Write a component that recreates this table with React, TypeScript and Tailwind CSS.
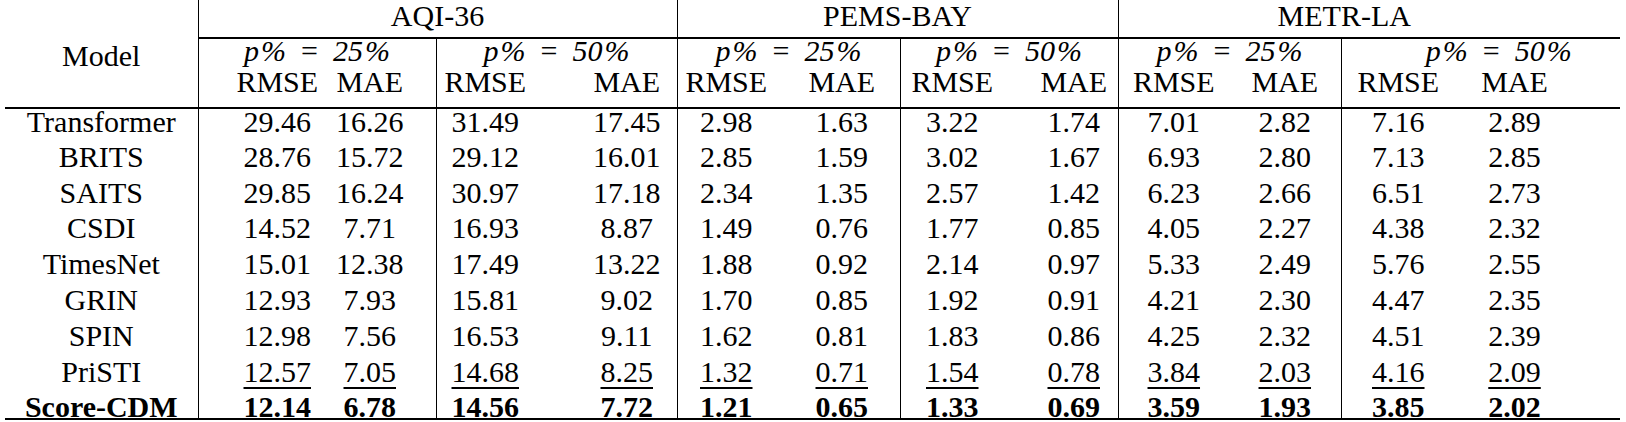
import React from "react";

// column padding nudges each value onto the same x as the printed table
const colCls = [
  "pl-[33px]",
  "pr-[19px]",
  "pr-[22px]",
  "pl-[21px]",
  "pr-[9px]",
  "",
  "pr-[9px]",
  "pl-[17px]",
  "",
  "",
  "",
  "pr-[46px]",
];

const rows: { name: string; vals: string[]; kind?: "under" | "bold" }[] = [
  { name: "Transformer", vals: ["29.46", "16.26", "31.49", "17.45", "2.98", "1.63", "3.22", "1.74", "7.01", "2.82", "7.16", "2.89"] },
  { name: "BRITS", vals: ["28.76", "15.72", "29.12", "16.01", "2.85", "1.59", "3.02", "1.67", "6.93", "2.80", "7.13", "2.85"] },
  { name: "SAITS", vals: ["29.85", "16.24", "30.97", "17.18", "2.34", "1.35", "2.57", "1.42", "6.23", "2.66", "6.51", "2.73"] },
  { name: "CSDI", vals: ["14.52", "7.71", "16.93", "8.87", "1.49", "0.76", "1.77", "0.85", "4.05", "2.27", "4.38", "2.32"] },
  { name: "TimesNet", vals: ["15.01", "12.38", "17.49", "13.22", "1.88", "0.92", "2.14", "0.97", "5.33", "2.49", "5.76", "2.55"] },
  { name: "GRIN", vals: ["12.93", "7.93", "15.81", "9.02", "1.70", "0.85", "1.92", "0.91", "4.21", "2.30", "4.47", "2.35"] },
  { name: "SPIN", vals: ["12.98", "7.56", "16.53", "9.11", "1.62", "0.81", "1.83", "0.86", "4.25", "2.32", "4.51", "2.39"] },
  { name: "PriSTI", vals: ["12.57", "7.05", "14.68", "8.25", "1.32", "0.71", "1.54", "0.78", "3.84", "2.03", "4.16", "2.09"], kind: "under" },
  { name: "Score-CDM", vals: ["12.14", "6.78", "14.56", "7.72", "1.21", "0.65", "1.33", "0.69", "3.59", "1.93", "3.85", "2.02"], kind: "bold" },
];

const groups = ["AQI-36", "PEMS-BAY", "METR-LA"];

const PHead = ({ v }: { v: string }) => (
  <span className="whitespace-nowrap">
    <span className="italic">
      p<span className="ml-[2px]">%</span>
    </span>
    <span className="mx-[15px]">=</span>
    <span className="italic">
      {v}
      <span className="ml-[2px]">%</span>
    </span>
  </span>
);

export default function App() {
  return (
    <div className="w-[1626px] h-[422px] overflow-hidden bg-white text-black font-['Liberation_Serif','Times_New_Roman',Times,serif] text-[30px] leading-[20px]">
      <table className="ml-[5px] w-[1615px] table-fixed border-collapse">
        <colgroup>
          <col className="w-[193px]" />
          <col className="w-[125px]" />
          <col className="w-[113px]" />
          <col className="w-[120px]" />
          <col className="w-[121px]" />
          <col className="w-[107px]" />
          <col className="w-[116px]" />
          <col className="w-[113px]" />
          <col className="w-[105px]" />
          <col className="w-[111px]" />
          <col className="w-[112px]" />
          <col className="w-[114px]" />
          <col className="w-[165px]" />
        </colgroup>
        <thead>
          <tr className="h-[38px]">
            <th
              rowSpan={3}
              className="font-normal align-middle pt-[4px] border-r border-b-2 border-black"
            >
              Model
            </th>
            {groups.map((g, i) => (
              <th
                key={g}
                colSpan={4}
                className={`font-normal align-middle pb-[6px] border-l border-b-2 border-black ${
                  i === 2 ? "pr-[50px]" : ""
                }`}
              >
                {g}
              </th>
            ))}
          </tr>
          <tr className="h-[30px]">
            {groups.map((g, gi) =>
              ["25", "50"].map((v) => (
                <th
                  key={g + v}
                  colSpan={2}
                  className={`font-normal align-middle pb-[6px] border-l border-black ${
                    gi === 2 && v === "50" ? "pl-[36px]" : ""
                  }`}
                >
                  <PHead v={v} />
                </th>
              ))
            )}
          </tr>
          <tr className="h-[40px]">
            {colCls.map((c, i) => (
              <th
                key={i}
                className={`font-normal align-middle pb-[12px] border-b-2 border-black ${c} ${
                  i % 2 === 0 ? "border-l" : ""
                }`}
              >
                {i % 2 === 0 ? "RMSE" : "MAE"}
              </th>
            ))}
          </tr>
        </thead>
        <tbody>
          {rows.map((r, ri) => {
            const last = ri === rows.length - 1;
            const cellCls = last
              ? "h-[25px] align-top pt-[3px] font-bold border-b-2"
              : "h-[35.8px] align-top pt-[3px]";
            return (
              <tr key={r.name}>
                <td className={`text-center border-r border-black ${cellCls}`}>{r.name}</td>
                {r.vals.map((v, i) => (
                  <td
                    key={i}
                    className={`text-center border-black ${cellCls} ${colCls[i]} ${
                      i % 2 === 0 ? "border-l" : ""
                    }`}
                  >
                    {r.kind === "under" ? (
                      <span className="underline decoration-[2px] underline-offset-[5px]">{v}</span>
                    ) : (
                      v
                    )}
                  </td>
                ))}
              </tr>
            );
          })}
        </tbody>
      </table>
    </div>
  );
}
